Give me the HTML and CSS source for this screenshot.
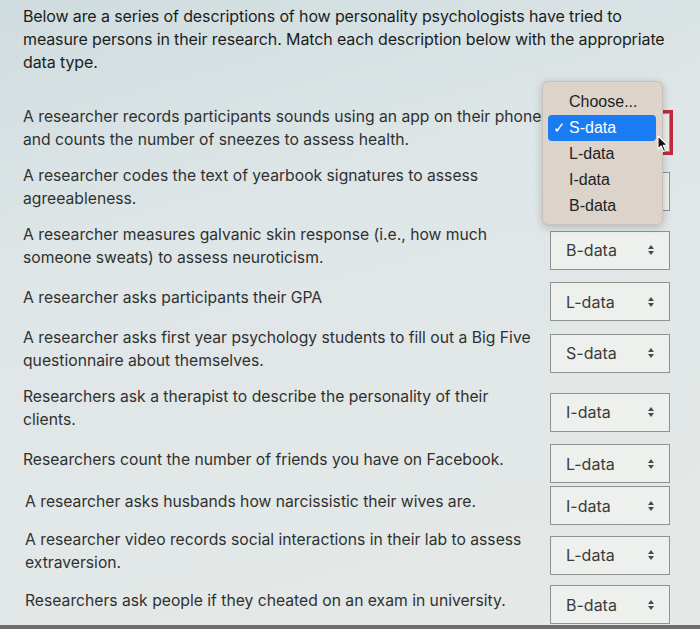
FILE: index.html
```html
<!DOCTYPE html>
<html lang="en">
<head>
<meta charset="utf-8">
<title>Match data types</title>
<link rel="stylesheet" href="styles.css">
</head>
<body>
<main class="quiz">
  <p class="intro">Below are a series of descriptions of how personality psychologists have tried to<br>measure persons in their research. Match each description below with the appropriate<br>data type.</p>
  <div class="rows">
    <div class="row">
      <p class="desc">A researcher records participants sounds using an app on their phone<br>and counts the number of sneezes to assess health.</p>
      <div class="select focused">
        <span class="value">S-data</span>
        <span class="arrows"></span>
        <ul class="popup">
          <li class="opt">Choose...</li>
          <li class="opt active"><span class="check">✓</span>S-data</li>
          <li class="opt">L-data</li>
          <li class="opt">I-data</li>
          <li class="opt">B-data</li>
        </ul>
        <svg class="cursor" width="12" height="18" viewBox="0 0 12 18"><path d="M1 1 L1 14 L4.2 11 L6.6 16.5 L8.6 15.6 L6.3 10.3 L10.6 10.3 Z" fill="#111" stroke="#fff" stroke-width="1.1" stroke-linejoin="round"/></svg>
      </div>
    </div>
    <div class="row">
      <p class="desc">A researcher codes the text of yearbook signatures to assess<br>agreeableness.</p>
      <div class="select"><span class="value">I-data</span><span class="arrows"></span></div>
    </div>
    <div class="row">
      <p class="desc">A researcher measures galvanic skin response (i.e., how much<br>someone sweats) to assess neuroticism.</p>
      <div class="select"><span class="value">B-data</span><span class="arrows"></span></div>
    </div>
    <div class="row">
      <p class="desc">A researcher asks participants their GPA</p>
      <div class="select"><span class="value">L-data</span><span class="arrows"></span></div>
    </div>
    <div class="row">
      <p class="desc">A researcher asks first year psychology students to fill out a Big Five<br>questionnaire about themselves.</p>
      <div class="select"><span class="value">S-data</span><span class="arrows"></span></div>
    </div>
    <div class="row">
      <p class="desc">Researchers ask a therapist to describe the personality of their<br>clients.</p>
      <div class="select"><span class="value">I-data</span><span class="arrows"></span></div>
    </div>
    <div class="row">
      <p class="desc">Researchers count the number of friends you have on Facebook.</p>
      <div class="select"><span class="value">L-data</span><span class="arrows"></span></div>
    </div>
    <div class="row snug">
      <p class="desc">A researcher asks husbands how narcissistic their wives are.</p>
      <div class="select"><span class="value">I-data</span><span class="arrows"></span></div>
    </div>
    <div class="row snug">
      <p class="desc">A researcher video records social interactions in their lab to assess<br>extraversion.</p>
      <div class="select"><span class="value">L-data</span><span class="arrows"></span></div>
    </div>
    <div class="row snug">
      <p class="desc">Researchers ask people if they cheated on an exam in university.</p>
      <div class="select"><span class="value">B-data</span><span class="arrows"></span></div>
    </div>
  </div>
</main>
</body>
</html>
```
FILE: styles.css
```css
html, body {
  margin: 0;
  padding: 0;
}
body {
  width: 700px;
  height: 629px;
  overflow: hidden;
  background: linear-gradient(165deg, #cfdcdf 0%, #dfe6e7 35%, #e5e9e7 100%);
  box-shadow: inset 0 -4px 0 #6b6e6e;
  font-family: Inter, "Liberation Sans", Arial, sans-serif;
  color: #2a2c2c;
}
.quiz {
  padding: 5px 0 0 23px;
}
.intro {
  margin: 0 0 31px 0;
  font-size: 16px;
  line-height: 23px;
  color: #1b1d1d;
  letter-spacing: -0.12px;
  white-space: nowrap;
}
.rows {
  display: flex;
  flex-direction: column;
  gap: 5px;
}
.row {
  display: flex;
  align-items: center;
}
.row.snug {
  margin-top: -2px;
  padding-left: 2px;
}
.row.snug .select {
  margin-left: -2px;
}
.desc {
  margin: 0 0 8px 0;
  width: 527px;
  font-size: 15.7px;
  line-height: 23px;
  white-space: nowrap;
  color: #2f3131;
}
.select {
  position: relative;
  box-sizing: border-box;
  width: 120px;
  height: 39px;
  border: 1px solid #8e9392;
  background: #edf0ec;
  display: flex;
  align-items: center;
  justify-content: space-between;
  padding: 0 14px 0 15px;
  font-size: 16px;
  color: #3a3c3c;
}
.select.focused {
  outline: 3px solid #c22a3c;
  outline-offset: 0;
}
.arrows {
  width: 7px;
  height: 10px;
  position: relative;
}
.arrows::before,
.arrows::after {
  content: "";
  position: absolute;
  left: 0;
  border-left: 3.5px solid transparent;
  border-right: 3.5px solid transparent;
}
.arrows::before {
  top: 0;
  border-bottom: 4px solid #4a4c4c;
}
.arrows::after {
  bottom: 0;
  border-top: 4px solid #4a4c4c;
}
.popup {
  position: absolute;
  left: -9px;
  top: -33px;
  width: 121px;
  margin: 0;
  padding: 7px 0 5px 0;
  list-style: none;
  background: #dcd3cb;
  border: 1px solid #c9c1ba;
  border-radius: 6px;
  box-shadow: 0 2px 8px rgba(0,0,0,0.22);
  box-sizing: border-box;
  z-index: 5;
}
.opt {
  position: relative;
  height: 26px;
  line-height: 26px;
  margin: 0 6px 0 5px;
  padding-left: 21px;
  font-size: 16px;
  font-family: "Liberation Sans", Arial, sans-serif;
  color: #222;
  border-radius: 4px;
}
.opt.active {
  background: #1a7cf2;
  color: #fff;
}
.check {
  position: absolute;
  left: 5px;
  font-size: 15px;
}
.cursor {
  position: absolute;
  left: 106px;
  top: 21px;
  z-index: 6;
}
```
